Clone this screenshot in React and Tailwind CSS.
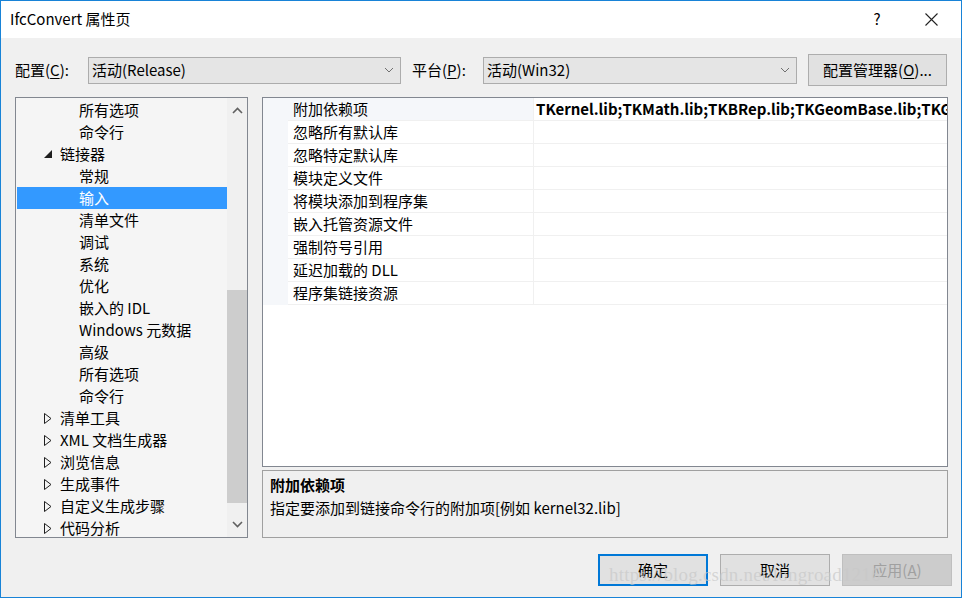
import React from 'react'

const font = "font-['Noto_Sans_CJK_SC','Noto_Sans',sans-serif]"

const U = ({ children }) => <span className="underline underline-offset-2">{children}</span>

const ComboChevron = () => (
  <svg width="10" height="6" viewBox="0 0 10 6" className="shrink-0">
    <polyline points="1,1 5,5 9,1" fill="none" stroke="#707070" strokeWidth="1" />
  </svg>
)

const ScrollChevron = ({ up }) => (
  <svg width="11" height="7" viewBox="0 0 11 7">
    <polyline
      points={up ? '1,6 5.5,1.5 10,6' : '1,1 5.5,5.5 10,1'}
      fill="none"
      stroke="#606060"
      strokeWidth="1.6"
    />
  </svg>
)

const treeRows = [
  { t: '所有选项', lvl: 2 },
  { t: '命令行', lvl: 2 },
  { t: '链接器', lvl: 1, open: true },
  { t: '常规', lvl: 2 },
  { t: '输入', lvl: 2, sel: true },
  { t: '清单文件', lvl: 2 },
  { t: '调试', lvl: 2 },
  { t: '系统', lvl: 2 },
  { t: '优化', lvl: 2 },
  { t: '嵌入的 IDL', lvl: 2 },
  { t: 'Windows 元数据', lvl: 2 },
  { t: '高级', lvl: 2 },
  { t: '所有选项', lvl: 2 },
  { t: '命令行', lvl: 2 },
  { t: '清单工具', lvl: 1 },
  { t: 'XML 文档生成器', lvl: 1 },
  { t: '浏览信息', lvl: 1 },
  { t: '生成事件', lvl: 1 },
  { t: '自定义生成步骤', lvl: 1 },
  { t: '代码分析', lvl: 1 },
]

const props = [
  '附加依赖项',
  '忽略所有默认库',
  '忽略特定默认库',
  '模块定义文件',
  '将模块添加到程序集',
  '嵌入托管资源文件',
  '强制符号引用',
  '延迟加载的 DLL',
  '程序集链接资源',
]

const TreeRow = ({ row }) => (
  <div
    className={`h-[22px] shrink-0 flex items-center text-[15px] leading-[22px] whitespace-nowrap ${
      row.sel ? 'bg-[#3399ff] text-white' : 'text-black'
    }`}
  >
    {row.lvl === 1 ? (
      <>
        <span className="w-[35px] shrink-0 flex justify-end">
          {row.open ? (
            <svg width="8" height="8" viewBox="0 0 8 8">
              <polygon points="0,8 8,8 8,0" fill="#1e1e1e" />
            </svg>
          ) : (
            <svg width="8" height="11" viewBox="0 0 8 11">
              <polygon points="0.5,0.5 7,5.5 0.5,10.5" fill="none" stroke="#1e1e1e" strokeWidth="1" />
            </svg>
          )}
        </span>
        <span className="pl-[8px]">{row.t}</span>
      </>
    ) : (
      <span className="pl-[62px]">{row.t}</span>
    )}
  </div>
)

export default function App() {
  return (
    <div className={`${font} w-[962px] h-[598px] border border-[#1883d7] bg-[#f0f0f0] flex flex-col relative overflow-hidden`}>
      {/* title bar */}
      <div className="h-[37px] shrink-0 bg-white flex items-center pl-[9px] text-[15px] text-black">
        <span className="flex-1">IfcConvert 属性页</span>
        <span className="w-[46px] text-center text-[15px] mr-[8px]">?</span>
        <span className="w-[46px] flex justify-center mr-[7px]">
          <svg width="13" height="13" viewBox="0 0 13 13">
            <path d="M0.5 0.5 L12.5 12.5 M12.5 0.5 L0.5 12.5" stroke="#222" strokeWidth="1.1" />
          </svg>
        </span>
      </div>

      {/* config row */}
      <div className="mt-[16px] h-[32px] shrink-0 flex items-center pl-[14px] text-[15px] text-black">
        <span className="w-[73px]">配置(<U>C</U>):</span>
        <div className="w-[313px] h-[27px] bg-[#e5e5e5] border border-[#acacac] flex items-center pl-[3px] pr-[6px]">
          <span className="flex-1">活动(Release)</span>
          <ComboChevron />
        </div>
        <span className="ml-[11px] w-[71px]">平台(<U>P</U>):</span>
        <div className="w-[314px] h-[27px] bg-[#e5e5e5] border border-[#acacac] flex items-center pl-[3px] pr-[6px]">
          <span className="flex-1">活动(Win32)</span>
          <ComboChevron />
        </div>
        <div className="ml-[11px] w-[139px] h-[32px] bg-[#e1e1e1] border border-[#adadad] flex items-center justify-center">
          配置管理器(<U>O</U>)...
        </div>
      </div>

      {/* main area */}
      <div className="mt-[11px] h-[441px] shrink-0 flex pl-[14px]">
        {/* tree */}
        <div className="w-[233px] h-full border border-[#828790] bg-[#f5f5f5] flex overflow-hidden">
          <div className="flex-1 pl-[1px] pt-[1px] flex flex-col overflow-hidden">
            {treeRows.map((r, i) => (
              <TreeRow key={i} row={r} />
            ))}
          </div>
          <div className="w-[20px] bg-[#f0f0f0] flex flex-col">
            <div className="h-[25px] shrink-0 flex items-center justify-center">
              <ScrollChevron up />
            </div>
            <div className="flex-1 flex flex-col">
              <div className="mt-[167px] h-[213px] bg-[#cdcdcd]" />
            </div>
            <div className="h-[25px] shrink-0 flex items-center justify-center">
              <ScrollChevron />
            </div>
          </div>
        </div>

        {/* right column */}
        <div className="ml-[14px] w-[686px] h-full flex flex-col">
          <div className="h-[370px] shrink-0 border border-[#828790] bg-white overflow-hidden">
            {props.map((p, i) => (
              <div key={i} className="h-[23px] flex text-[15px] leading-[22px] text-black">
                <div className="w-[25px] shrink-0 bg-[#f5f7fa]" />
                <div
                  className={`w-[246px] shrink-0 border-b border-r border-[#f0f0f0] pl-[5px] whitespace-nowrap ${
                    i === 0 ? 'bg-[#f5f7fa]' : 'bg-white'
                  }`}
                >
                  {p}
                </div>
                <div className="flex-1 min-w-0 border-b border-[#f0f0f0] pl-[2px] whitespace-nowrap overflow-hidden font-bold">
                  {i === 0 ? 'TKernel.lib;TKMath.lib;TKBRep.lib;TKGeomBase.lib;TKGeomAlgo.lib;TKG3d.lib' : ''}
                </div>
              </div>
            ))}
          </div>
          <div className="mt-[3px] h-[68px] shrink-0 border border-[#a0a0a0] bg-[#f0f0f0] pl-[7px] pt-[2px] text-[15px] leading-[23px] text-black">
            <div className="font-bold">附加依赖项</div>
            <div>指定要添加到链接命令行的附加项[例如 kernel32.lib]</div>
          </div>
        </div>
      </div>

      {/* buttons */}
      <div className="mt-[16px] h-[32px] shrink-0 flex justify-end gap-[12px] pr-[9px] text-[15px]">
        <div className="w-[110px] h-[32px] border-2 border-[#0078d7] bg-[#e1e1e1] flex items-center justify-center text-black">
          确定
        </div>
        <div className="w-[110px] h-[32px] border border-[#adadad] bg-[#e1e1e1] flex items-center justify-center text-black">
          取消
        </div>
        <div className="w-[110px] h-[32px] border border-[#bfbfbf] bg-[#cccccc] flex items-center justify-center text-[#a0a0a0]">
          应用(<U>A</U>)
        </div>
      </div>

      {/* watermark */}
      <div className="absolute left-[608px] top-[560px] font-['Liberation_Serif',serif] text-[19px] tracking-[0.2px] text-[#c8c8c8]/70 whitespace-nowrap pointer-events-none">
        https://blog.csdn.net/longroad1216
      </div>
    </div>
  )
}
